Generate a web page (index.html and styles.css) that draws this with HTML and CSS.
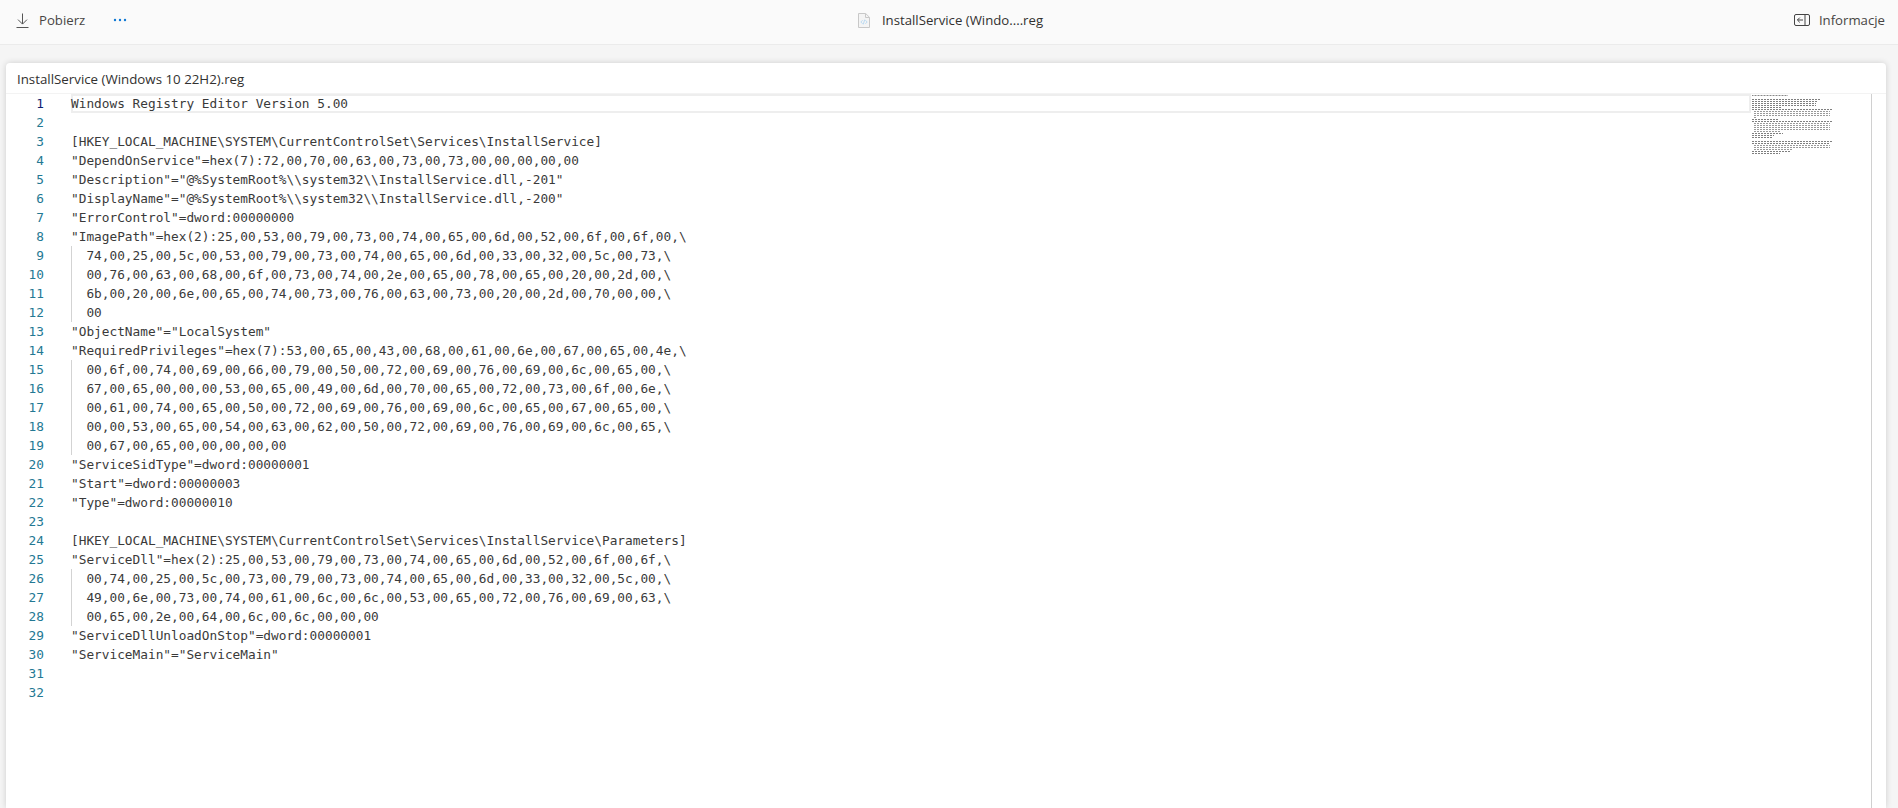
FILE: index.html
```html
<!DOCTYPE html>
<html lang="pl">
<head>
<meta charset="utf-8">
<title>InstallService (Windows 10 22H2).reg</title>
<link rel="stylesheet" href="styles.css">
</head>
<body>
<header class="toolbar">
  <div class="tb-left">
    <button class="tb-btn">
      <svg class="ico-dl" width="13" height="15" viewBox="0 0 13 15"><path d="M6.5 .5V11M2 6.6l4.5 4.5L11 6.6M.5 14.5h12" fill="none" stroke="#555" stroke-width="1"/></svg>
      <span>Pobierz</span>
    </button>
    <button class="tb-more" aria-label="Więcej">
      <svg width="14" height="4" viewBox="0 0 14 4"><circle cx="2" cy="2" r="1.2" fill="#0f78d4"/><circle cx="7" cy="2" r="1.2" fill="#0f78d4"/><circle cx="12" cy="2" r="1.2" fill="#0f78d4"/></svg>
    </button>
  </div>
  <div class="tb-center">
    <svg width="12" height="15" viewBox="0 0 12 15"><path d="M.5 .5h7.2l3.8 3.8v10.2H.5z" fill="#f4f4f4" stroke="#c8c8c8"/><path d="M7.5 .8v3.7h3.7" fill="none" stroke="#c8c8c8"/><path d="M4.6 7.2L2.8 9l1.8 1.8M7.4 7.2L9.2 9l-1.8 1.8M6.7 6.6l-1.4 4.8" fill="none" stroke="#a9d2f0" stroke-width=".8"/></svg>
    <span>InstallService (Windo....reg</span>
  </div>
  <div class="tb-right">
    <button class="tb-btn">
      <svg width="16" height="12" viewBox="0 0 16 12"><rect x=".5" y=".5" width="15" height="11" rx="1.5" fill="none" stroke="#444"/><path d="M11 .5v11" stroke="#444"/><path d="M9 6H3.5M5.8 3.6L3.4 6l2.4 2.4" fill="none" stroke="#444"/></svg>
      <span>Informacje</span>
    </button>
  </div>
</header>

<main class="card">
  <div class="card-title">InstallService (Windows 10 22H2).reg</div>
  <div class="editor">
    <div class="gutter">
      <div class="num active">1</div><div class="num">2</div><div class="num">3</div><div class="num">4</div><div class="num">5</div><div class="num">6</div><div class="num">7</div><div class="num">8</div><div class="num">9</div><div class="num">10</div><div class="num">11</div><div class="num">12</div><div class="num">13</div><div class="num">14</div><div class="num">15</div><div class="num">16</div><div class="num">17</div><div class="num">18</div><div class="num">19</div><div class="num">20</div><div class="num">21</div><div class="num">22</div><div class="num">23</div><div class="num">24</div><div class="num">25</div><div class="num">26</div><div class="num">27</div><div class="num">28</div><div class="num">29</div><div class="num">30</div><div class="num">31</div><div class="num">32</div>
    </div>
    <div class="code">
      <div class="line current">Windows Registry Editor Version 5.00</div>
      <div class="line"></div>
      <div class="line">[HKEY_LOCAL_MACHINE\SYSTEM\CurrentControlSet\Services\InstallService]</div>
      <div class="line">"DependOnService"=hex(7):72,00,70,00,63,00,73,00,73,00,00,00,00,00</div>
      <div class="line">"Description"="@%SystemRoot%\\system32\\InstallService.dll,-201"</div>
      <div class="line">"DisplayName"="@%SystemRoot%\\system32\\InstallService.dll,-200"</div>
      <div class="line">"ErrorControl"=dword:00000000</div>
      <div class="line">"ImagePath"=hex(2):25,00,53,00,79,00,73,00,74,00,65,00,6d,00,52,00,6f,00,6f,00,\</div>
      <div class="indent">
        <div class="line">74,00,25,00,5c,00,53,00,79,00,73,00,74,00,65,00,6d,00,33,00,32,00,5c,00,73,\</div>
        <div class="line">00,76,00,63,00,68,00,6f,00,73,00,74,00,2e,00,65,00,78,00,65,00,20,00,2d,00,\</div>
        <div class="line">6b,00,20,00,6e,00,65,00,74,00,73,00,76,00,63,00,73,00,20,00,2d,00,70,00,00,\</div>
        <div class="line">00</div>
      </div>
      <div class="line">"ObjectName"="LocalSystem"</div>
      <div class="line">"RequiredPrivileges"=hex(7):53,00,65,00,43,00,68,00,61,00,6e,00,67,00,65,00,4e,\</div>
      <div class="indent">
        <div class="line">00,6f,00,74,00,69,00,66,00,79,00,50,00,72,00,69,00,76,00,69,00,6c,00,65,00,\</div>
        <div class="line">67,00,65,00,00,00,53,00,65,00,49,00,6d,00,70,00,65,00,72,00,73,00,6f,00,6e,\</div>
        <div class="line">00,61,00,74,00,65,00,50,00,72,00,69,00,76,00,69,00,6c,00,65,00,67,00,65,00,\</div>
        <div class="line">00,00,53,00,65,00,54,00,63,00,62,00,50,00,72,00,69,00,76,00,69,00,6c,00,65,\</div>
        <div class="line">00,67,00,65,00,00,00,00,00</div>
      </div>
      <div class="line">"ServiceSidType"=dword:00000001</div>
      <div class="line">"Start"=dword:00000003</div>
      <div class="line">"Type"=dword:00000010</div>
      <div class="line"></div>
      <div class="line">[HKEY_LOCAL_MACHINE\SYSTEM\CurrentControlSet\Services\InstallService\Parameters]</div>
      <div class="line">"ServiceDll"=hex(2):25,00,53,00,79,00,73,00,74,00,65,00,6d,00,52,00,6f,00,6f,\</div>
      <div class="indent">
        <div class="line">00,74,00,25,00,5c,00,73,00,79,00,73,00,74,00,65,00,6d,00,33,00,32,00,5c,00,\</div>
        <div class="line">49,00,6e,00,73,00,74,00,61,00,6c,00,6c,00,53,00,65,00,72,00,76,00,69,00,63,\</div>
        <div class="line">00,65,00,2e,00,64,00,6c,00,6c,00,00,00</div>
      </div>
      <div class="line">"ServiceDllUnloadOnStop"=dword:00000001</div>
      <div class="line">"ServiceMain"="ServiceMain"</div>
    </div>
    <div class="minimap">
      <svg width="81" height="62" viewBox="0 0 81 62"><path class="mm-first" d="M0 1.5h36"/><path class="mm-text" d="M0 5.5h69M0 7.5h66M0 9.5h64M0 11.5h64M0 13.5h29M0 15.5h80M0 25.5h26M0 27.5h80M0 39.5h31M0 41.5h22M0 43.5h21M0 47.5h80M0 49.5h78M0 57.5h39M0 59.5h28"/><path class="mm-hex" d="M2 17.5h76M2 19.5h76M2 21.5h76M2 23.5h2M2 29.5h76M2 31.5h76M2 33.5h76M2 35.5h76M2 37.5h26M2 51.5h76M2 53.5h76M2 55.5h38"/></svg>
    </div>
    <div class="ruler"></div>
  </div>
</main>
</body>
</html>
```

FILE: styles.css
```css
* { box-sizing: border-box; }
html, body { height: 100%; }
body {
  margin: 0;
  display: flex;
  flex-direction: column;
  overflow: hidden;
  background: #f5f5f5;
  color: #323130;
  font-family: "Open Sans", "Noto Sans", sans-serif;
  font-size: 13.2px;
}
button {
  font: inherit;
  color: inherit;
  background: none;
  border: 0;
  padding: 0;
}
.toolbar {
  flex: none;
  height: 45px;
  display: grid;
  grid-template-columns: 1fr auto 1fr;
  align-items: center;
  padding: 0 13px 4px 16px;
  background: #fafafa;
  border-bottom: 1px solid #ebebeb;
}
.tb-left { display: flex; align-items: center; gap: 28px; }
.tb-btn { display: flex; align-items: center; gap: 9px; color: #484644; }
.ico-dl { margin-right: 1px; }
.tb-more { display: flex; align-items: center; }
.tb-center { display: flex; align-items: center; gap: 12px; color: #323130; }
.tb-right { display: flex; justify-content: flex-end; }
.card {
  flex: 1;
  min-height: 0;
  margin: 18px 12px 0 6px;
  background: #fff;
  border-radius: 4px 4px 0 0;
  box-shadow: 0 0 6px rgba(0, 0, 0, .16);
  overflow: hidden;
}
.card-title {
  height: 31px;
  padding: 1px 0 0 11px;
  line-height: 30px;
  font-size: 13.3px;
  color: #323130;
  border-bottom: 1px solid #f3f3f3;
}
.editor {
  display: flex;
  height: calc(100% - 31px);
  font-family: "DejaVu Sans Mono", "Liberation Mono", monospace;
  font-size: 12.79px;
  line-height: 19px;
}
.gutter { flex: none; width: 65px; padding-right: 27px; }
.num { height: 19px; text-align: right; color: #237893; }
.num.active { color: #0b216f; }
.code { flex: none; width: 1680px; color: #3a3a3a; }
.line { height: 19px; white-space: pre; }
.line.current { box-shadow: inset 0 0 0 2px #eee; }
.indent { border-left: 1px solid #d3d3d3; padding-left: 14.4px; }
.minimap { flex: none; width: 120px; }
.minimap svg { display: block; margin-left: 1px; }
.minimap path { fill: none; stroke-width: 1; }
.mm-first { stroke: #888; stroke-dasharray: 1 .5; }
.mm-text { stroke: #7f7f7f; stroke-dasharray: 2 1; }
.mm-hex { stroke: #9a9a9a; stroke-dasharray: 2 1; }
.ruler { flex: none; width: 15px; border-left: 1px solid #d0d0d0; }
```
